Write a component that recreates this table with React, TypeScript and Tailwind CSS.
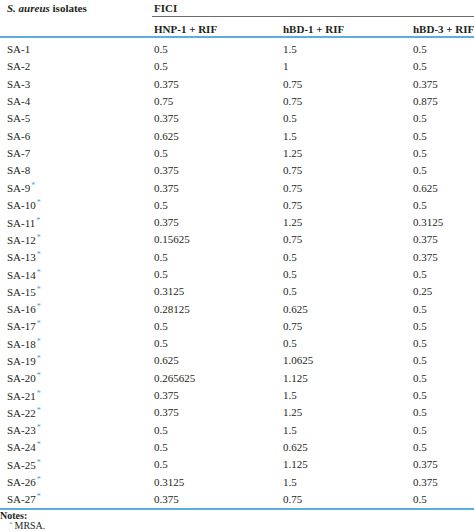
import React from "react";

const rows: [string, boolean, string, string, string][] = [
  ["SA-1", false, "0.5", "1.5", "0.5"],
  ["SA-2", false, "0.5", "1", "0.5"],
  ["SA-3", false, "0.375", "0.75", "0.375"],
  ["SA-4", false, "0.75", "0.75", "0.875"],
  ["SA-5", false, "0.375", "0.5", "0.5"],
  ["SA-6", false, "0.625", "1.5", "0.5"],
  ["SA-7", false, "0.5", "1.25", "0.5"],
  ["SA-8", false, "0.375", "0.75", "0.5"],
  ["SA-9", true, "0.375", "0.75", "0.625"],
  ["SA-10", true, "0.5", "0.75", "0.5"],
  ["SA-11", true, "0.375", "1.25", "0.3125"],
  ["SA-12", true, "0.15625", "0.75", "0.375"],
  ["SA-13", true, "0.5", "0.5", "0.375"],
  ["SA-14", true, "0.5", "0.5", "0.5"],
  ["SA-15", true, "0.3125", "0.5", "0.25"],
  ["SA-16", true, "0.28125", "0.625", "0.5"],
  ["SA-17", true, "0.5", "0.75", "0.5"],
  ["SA-18", true, "0.5", "0.5", "0.5"],
  ["SA-19", true, "0.625", "1.0625", "0.5"],
  ["SA-20", true, "0.265625", "1.125", "0.5"],
  ["SA-21", true, "0.375", "1.5", "0.5"],
  ["SA-22", true, "0.375", "1.25", "0.5"],
  ["SA-23", true, "0.5", "1.5", "0.5"],
  ["SA-24", true, "0.5", "0.625", "0.5"],
  ["SA-25", true, "0.5", "1.125", "0.375"],
  ["SA-26", true, "0.3125", "1.5", "0.375"],
  ["SA-27", true, "0.375", "0.75", "0.5"],
];

const Star = () => (
  <span className="text-[8px] text-[#4a9fd4] align-[4px] ml-[1px]">*</span>
);

export default function App() {
  return (
    <div
      className="w-[474px] h-[532px] bg-white text-[#231f20] text-[11px] leading-none overflow-hidden"
      style={{ fontFamily: '"Liberation Serif", "Times New Roman", serif' }}
    >
      {/* header row 1 */}
      <div className="grid grid-cols-[154px_1fr] h-[16px] items-center">
        <div className="pl-[7px] font-bold">
          <i>S. aureus</i> isolates
        </div>
        <div className="font-bold">FICI</div>
      </div>
      <div className="flex">
        <div className="w-[152px]" />
        <div className="flex-1 h-px bg-[#6b6b6b]" />
      </div>
      {/* header row 2 */}
      <div className="grid grid-cols-[154px_129px_130px_1fr] h-[19px] items-center pt-[5px] font-bold">
        <div />
        <div>HNP-1 + RIF</div>
        <div>hBD-1 + RIF</div>
        <div className="whitespace-nowrap">hBD-3 + RIF</div>
      </div>
      <div className="h-[2px] bg-[#5aaee0]" />
      {/* body */}
      <div className="pt-[3px]">
        {rows.map(([id, mrsa, a, b, c]) => (
          <div
            key={id}
            className="grid grid-cols-[154px_129px_130px_1fr] h-[17.3px] items-center"
          >
            <div className="pl-[7px]">
              {id}
              {mrsa && <Star />}
            </div>
            <div>{a}</div>
            <div>{b}</div>
            <div>{c}</div>
          </div>
        ))}
      </div>
      <div className="h-[2px] bg-[#5aaee0]" />
      <div className="font-bold text-[10px] leading-[9px] pt-[1px]">Notes:</div>
      <div className="pl-[9px] text-[10px] leading-[9px]">
        <span className="text-[7px] text-[#4a9fd4] align-[3px] mr-[2px]">*</span>
        MRSA.
      </div>
    </div>
  );
}
